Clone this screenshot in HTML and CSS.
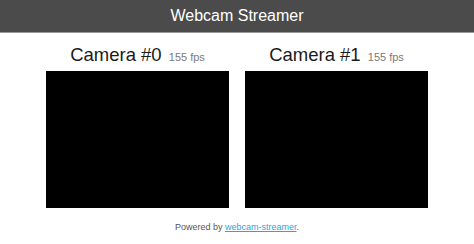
FILE: index.html
```html
<!DOCTYPE html>
<html lang="en">

<head>
  <meta charset="UTF-8">
  <meta name="viewport" content="width=device-width, initial-scale=1.0">
  <title>Webcam Streamer</title>
  <link rel="stylesheet" href="styles.css">
</head>

<body>
<div class="header">Webcam Streamer</div>
<div class="cameras">
  <div class="camera">
    <h2>Camera #0 <small>155 fps</small></h2>
    <div class="camera_view"></div>
  </div>
  <div class="camera">
    <h2>Camera #1 <small>155 fps</small></h2>
    <div class="camera_view"></div>
  </div>
</div>
<p class="footer">Powered by <a href="#">webcam-streamer</a>.</p>
</body>

</html>
```

FILE: styles.css
```css
body,
h2,
p {
  padding: 0;
  margin: 0;
  font-family: 'Liberation Sans', Arial, sans-serif;
}

body {
  background: #fff;
  color: #222;
}

.header {
  height: 32px;
  line-height: 32px;
  background: #4b4b4b;
  border-bottom: 1px solid #9a9a9a;
  color: #fff;
  font-size: 16px;
  text-align: center;
}

.cameras {
  display: flex;
  justify-content: center;
  gap: 16px;
  margin-top: 11px;
}

.camera {
  width: 183px;
}

.camera h2 {
  font-size: 18.5px;
  font-weight: normal;
  line-height: 22px;
  text-align: center;
  margin-bottom: 3px;
  color: #1a1a1a;
}

.camera h2 small {
  font-size: 11px;
  color: #7a7a7a;
  margin-left: 2px;
}

.camera_view {
  height: 137px;
  background: #000;
}

.footer {
  margin-top: 14px;
  font-size: 9px;
  line-height: 11px;
  text-align: center;
  color: #555;
}

.footer a {
  color: #2fa4d8;
}
```
